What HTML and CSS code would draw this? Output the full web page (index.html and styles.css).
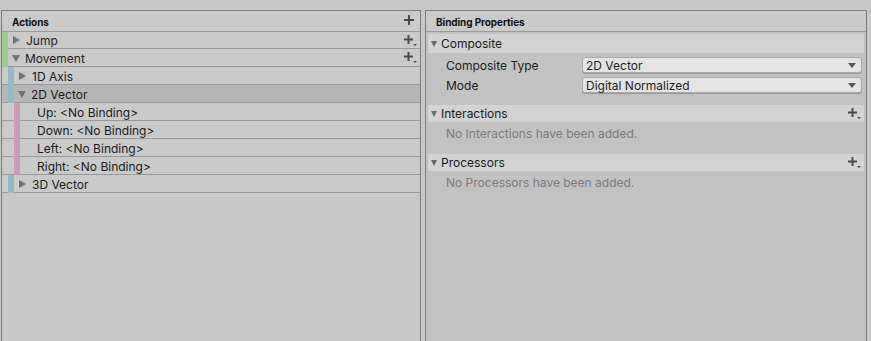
FILE: index.html
```html
<!DOCTYPE html>
<html>
<head>
<meta charset="utf-8">
<link rel="stylesheet" href="styles.css">
</head>
<body>
<div class="root">
  <div class="panel left">
    <div class="phead"><span>Actions</span><span class="plus big">
      <svg width="10" height="10" viewBox="0 0 10 10"><rect x="4" y="0" width="2" height="10" fill="#4a4a4a"/><rect x="0" y="4" width="10" height="2" fill="#4a4a4a"/></svg></span></div>
    <div class="row first"><span class="bar green"></span><span class="tri right"></span><span class="lbl">Jump</span><span class="plusdd"><svg width="13" height="11" viewBox="0 0 13 11"><rect x="3.5" y="0" width="2" height="9" fill="#4a4a4a"/><rect x="0" y="3.5" width="9" height="2" fill="#4a4a4a"/><path d="M9 9h4l-2 2z" fill="#4a4a4a"/></svg></span></div>
    <div class="row"><span class="bar green"></span><span class="tri down"></span><span class="lbl">Movement</span><span class="plusdd"><svg width="13" height="11" viewBox="0 0 13 11"><rect x="3.5" y="0" width="2" height="9" fill="#4a4a4a"/><rect x="0" y="3.5" width="9" height="2" fill="#4a4a4a"/><path d="M9 9h4l-2 2z" fill="#4a4a4a"/></svg></span></div>
    <div class="row"><span class="indent1"></span><span class="bar teal"></span><span class="tri right"></span><span class="lbl">1D Axis</span></div>
    <div class="row sel"><span class="indent1"></span><span class="bar teal"></span><span class="tri down"></span><span class="lbl">2D Vector</span></div>
    <div class="row"><span class="indent2"></span><span class="bar pink"></span><span class="lbl part">Up: &lt;No Binding&gt;</span></div>
    <div class="row"><span class="indent2"></span><span class="bar pink"></span><span class="lbl part">Down: &lt;No Binding&gt;</span></div>
    <div class="row"><span class="indent2"></span><span class="bar pink"></span><span class="lbl part">Left: &lt;No Binding&gt;</span></div>
    <div class="row"><span class="indent2"></span><span class="bar pink"></span><span class="lbl part">Right: &lt;No Binding&gt;</span></div>
    <div class="row"><span class="indent1"></span><span class="bar teal"></span><span class="tri right"></span><span class="lbl">3D Vector</span></div>
  </div>
  <div class="panel right">
    <div class="phead"><span>Binding Properties</span></div>
    <div class="body">
      <div class="fold first"><span class="tri down"></span><span>Composite</span></div>
      <div class="field f1"><span class="flabel">Composite Type</span><div class="dd"><span>2D Vector</span><span class="ddarrow"></span></div></div>
      <div class="field"><span class="flabel">Mode</span><div class="dd"><span>Digital Normalized</span><span class="ddarrow"></span></div></div>
      <div class="fold gapped"><span class="tri down"></span><span class="grow">Interactions</span><span class="plusdd"><svg width="13" height="11" viewBox="0 0 13 11"><rect x="3.5" y="0" width="2" height="9" fill="#4a4a4a"/><rect x="0" y="3.5" width="9" height="2" fill="#4a4a4a"/><path d="M9 9h4l-2 2z" fill="#4a4a4a"/></svg></span></div>
      <div class="note">No Interactions have been added.</div>
      <div class="fold gapped2"><span class="tri down"></span><span class="grow">Processors</span><span class="plusdd"><svg width="13" height="11" viewBox="0 0 13 11"><rect x="3.5" y="0" width="2" height="9" fill="#4a4a4a"/><rect x="0" y="3.5" width="9" height="2" fill="#4a4a4a"/><path d="M9 9h4l-2 2z" fill="#4a4a4a"/></svg></span></div>
      <div class="note">No Processors have been added.</div>
    </div>
  </div>
</div>
</body>
</html>
```
FILE: styles.css
```css
html, body { margin: 0; padding: 0; }
body {
  background: #c8c8c8;
  font-family: Inter, "Noto Sans", sans-serif;
  font-size: 12px;
  color: #1c1c1c;
  width: 871px;
  height: 341px;
  overflow: hidden;
}
.root {
  display: flex;
  padding: 10px 0 0 1px;
  gap: 4px;
  height: 331px;
}
.panel {
  border: 1px solid #7c7c7c;
  border-bottom: none;
  box-sizing: border-box;
  height: 331px;
}
.left { width: 420px; background: #c8c8c8; }
.right { width: 442px; background: #c2c2c2; }
.phead {
  height: 21px;
  box-sizing: border-box;
  border-bottom: 1px solid #999;
  background: #cbcbcb;
  display: flex;
  align-items: center;
  justify-content: space-between;
  padding: 1px 6px 0 10px;
  font-weight: 700;
  font-size: 10px;
  letter-spacing: -0.1px;
  color: #111;
}
.plus.big { display: flex; margin-top: -3px; }
.row {
  height: 18px;
  box-sizing: border-box;
  border-bottom: 1px solid #999;
  display: flex;
  align-items: center;
  background: #cacaca;
}
.row.first { height: 17px; }
.row.sel { background: #b6b6b6; }
.bar { width: 6px; align-self: stretch; margin-bottom: -1px; }
.green { background: #9bcd8d; }
.teal { background: #8ebbc4; }
.pink { background: #cf9ab9; }
.indent1 { width: 6px; }
.indent2 { width: 12px; }
.tri { width: 0; height: 0; display: inline-block; }
.tri.right {
  border-top: 4.5px solid transparent;
  border-bottom: 4.5px solid transparent;
  border-left: 7px solid #727272;
  margin: 0 6px 0 5px;
}
.tri.down {
  border-left: 4.5px solid transparent;
  border-right: 4.5px solid transparent;
  border-top: 7px solid #727272;
  margin: 1px 5px 0 4px;
}
.row .lbl { flex: 1; color: #1a1a1a; font-size: 12px; padding-top: 1px; }
.row .lbl.part { padding-left: 17px; }
.plusdd { display: flex; margin-right: 3px; }
.body { padding: 2px 2px 0 2px; }
.fold {
  height: 17px;
  background: #d3d3d3;
  display: flex;
  align-items: center;
  font-size: 12px;
  color: #1a1a1a;
}
.fold.first { height: 19px; }
.fold .tri.down {
  border-left-width: 3.5px;
  border-right-width: 3.5px;
  border-top: 6px solid #6a6a6a;
  margin: 1px 4px 0 3px;
}
.fold .grow { flex: 1; }
.fold .plusdd { margin-right: 3px; }
.field {
  display: flex;
  align-items: center;
  height: 20px;
  padding-left: 18px;
}
.field.f1 { margin-top: 2px; }
.flabel { width: 136px; }
.dd {
  flex: 1;
  height: 16px;
  box-sizing: border-box;
  background: #e4e4e4;
  border: 1px solid #a8a8a8;
  border-radius: 3px;
  display: flex;
  align-items: center;
  justify-content: space-between;
  padding: 0 5px 0 3px;
  margin-right: 2px;
  box-shadow: 0 1px 0 #999;
}
.ddarrow {
  width: 0; height: 0;
  border-left: 4px solid transparent;
  border-right: 4px solid transparent;
  border-top: 5px solid #555;
}
.gapped { margin-top: 10px; }
.gapped2 { margin-top: 8px; }
.note {
  color: #7a7a7a;
  padding-left: 18px;
  height: 24px;
  line-height: 24px;
}
```
